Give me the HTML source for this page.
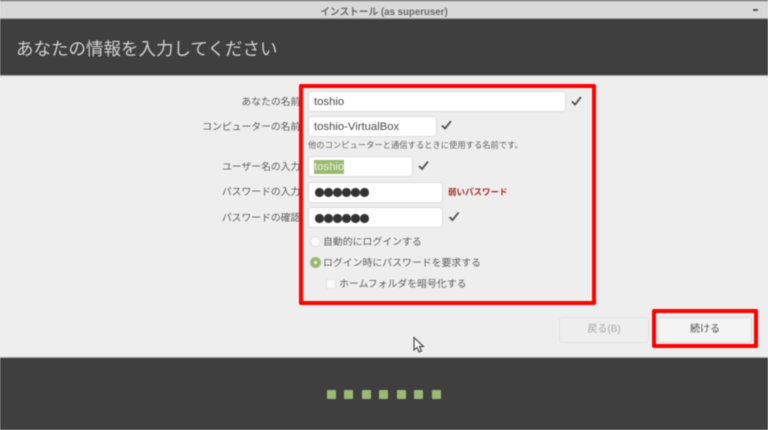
<!DOCTYPE html>
<html lang="ja"><head><meta charset="utf-8">
<style>
html,body{margin:0;padding:0;width:768px;height:430px;overflow:hidden;background:#eeeeee}
body{font-family:"Liberation Sans","Noto Sans CJK JP",sans-serif;color:#5a5a5a;position:relative}
#w{position:absolute;left:0;top:0;width:768px;height:430px;filter:blur(.5px)}
.a{position:absolute;white-space:nowrap}
.lb{position:absolute;left:0;width:303px;text-align:right;font-size:9.8px;line-height:14px;color:#5c5c5c;white-space:nowrap}
.f{position:absolute;left:308px;box-sizing:border-box;background:#fff;border:1px solid #dcdcdc;border-radius:3px;height:21px;font-size:11.3px;line-height:20px;padding-left:5px;color:#4a4a4a}
.d{position:absolute;top:5px;width:8.500px;height:8.500px;border-radius:50%;background:#333}
.c{position:absolute}
.s{position:absolute;top:390px;width:9px;height:9px;background:#9aba74;border-radius:1px}
.r{position:absolute;border:4px solid #f00;box-sizing:border-box}
.t{position:absolute;font-size:9.9px;line-height:14px;color:#5e5e5e;white-space:nowrap}
</style></head><body><div id="w">
<div class="a" style="left:0;top:0;width:768px;height:1px;background:#4a4a4a"></div>
<div class="a" style="left:0;top:1px;width:768px;height:17px;background:#d9d9d9"></div>
<div class="a" style="left:0;top:18px;width:768px;height:1px;background:#a9a9a9"></div>
<div class="a" style="left:0;width:768px;top:6px;text-align:center;font-size:9.700px;line-height:13px;color:#6a6a6a;font-weight:bold">インストール (as superuser)</div>
<div class="a" style="left:753px;top:9px;width:5px;height:2px;background:#555"></div>
<div class="a" style="left:0;top:19px;width:768px;height:56px;background:#3f3f3f"></div>
<div class="a" style="left:16px;top:37px;font-size:17.500px;line-height:24px;color:#d0d0d0">あなたの情報を入力してください</div>
<div class="a" style="left:0;top:75px;width:768px;height:1px;background:#a5a5a5"></div>

<div class="lb" style="top:96px">あなたの名前:</div>
<div class="lb" style="top:121px">コンピューターの名前:</div>
<div class="lb" style="top:161px">ユーザー名の入力:</div>
<div class="lb" style="top:186px">パスワードの入力:</div>
<div class="lb" style="top:212px">パスワードの確認:</div>

<div class="f" style="top:91px;width:258px">toshio</div>
<div class="f" style="top:116px;width:129px">toshio-VirtualBox</div>
<div class="a" style="left:308px;top:139px;font-size:8.300px;line-height:12px;color:#666">他のコンピューターと通信するときに使用する名前です。</div>
<div class="f" style="top:156px;width:105px"><span style="background:#9aba74;color:#e8f0e0;display:inline-block;line-height:14px">toshio</span></div>
<div class="f" style="top:182px;width:135px"><i class="d" style="left:6px"></i><i class="d" style="left:15px"></i><i class="d" style="left:24px"></i><i class="d" style="left:33px"></i><i class="d" style="left:42px"></i><i class="d" style="left:51px"></i></div>
<div class="f" style="top:207px;width:135px"><i class="d" style="left:6px;top:6px"></i><i class="d" style="left:15px;top:6px"></i><i class="d" style="left:24px;top:6px"></i><i class="d" style="left:33px;top:6px"></i><i class="d" style="left:42px;top:6px"></i><i class="d" style="left:51px;top:6px"></i></div>

<svg class="c" style="left:0;top:0" width="768" height="430" fill="none" stroke="#4d4d4d" stroke-width="1.800">
<path d="M572 101.500l3 3 6-7.500"/>
<path d="M442 125.500l3 3 6-7.500"/>
<path d="M419 166l3 3 6-7.500"/>
<path d="M449.500 217l3 3 6-7.500"/>
</svg>
<div class="a" style="left:448px;top:186px;font-size:8.500px;line-height:12px;font-weight:bold;color:#a52a2a">弱いパスワード</div>

<div class="a" style="left:310px;top:236px;width:11px;height:11px;box-sizing:border-box;border-radius:50%;background:#fafafa;border:1px solid #e2e2e2"></div>
<div class="t" style="left:323px;top:236px">自動的にログインする</div>
<div class="a" style="left:310px;top:257px;width:11px;height:11px;box-sizing:border-box;border-radius:50%;background:#9aba74"></div>
<div class="a" style="left:314px;top:261px;width:3px;height:3px;border-radius:50%;background:#f4f4f4"></div>
<div class="t" style="left:323px;top:257px">ログイン時にパスワードを要求する</div>
<div class="a" style="left:326px;top:279px;width:10px;height:10px;box-sizing:border-box;border-radius:1px;background:#fafafa;border:1px solid #e2e2e2"></div>
<div class="t" style="left:339px;top:278px">ホームフォルダを暗号化する</div>

<div class="a" style="left:559px;top:317px;width:90px;height:26px;box-sizing:border-box;background:#eee;border:1px solid #e2e2e2;border-radius:3px;text-align:center;font-size:10px;line-height:24px;color:#a8a8a8">戻る(B)</div>
<div class="a" style="left:658px;top:317px;width:94px;height:26px;box-sizing:border-box;background:#f4f4f4;border:1px dotted #bbb;border-radius:3px;text-align:center;font-size:10px;line-height:24px;color:#4e4e4e">続ける</div>

<div class="r" style="left:299px;top:84px;width:297px;height:221px;border-radius:2px"></div>
<div class="r" style="left:652px;top:309px;width:106px;height:39px;border-radius:2px"></div>

<svg class="c" style="left:412px;top:336px" width="14" height="18"><path d="M2 1.500V14l3-2.500 2 4.500 2.500-1-2-4.500 4 0z" fill="#f4f4f4" stroke="#333" stroke-width="1"/></svg>

<div class="a" style="left:0;top:357px;width:768px;height:1px;background:#a5a5a5"></div>
<div class="a" style="left:0;top:358px;width:768px;height:72px;background:#3f3f3f"></div>
<div class="s" style="left:327px"></div><div class="s" style="left:344px"></div><div class="s" style="left:362px"></div><div class="s" style="left:379px"></div><div class="s" style="left:397px"></div><div class="s" style="left:414px"></div><div class="s" style="left:432px"></div>
</div></body></html>
